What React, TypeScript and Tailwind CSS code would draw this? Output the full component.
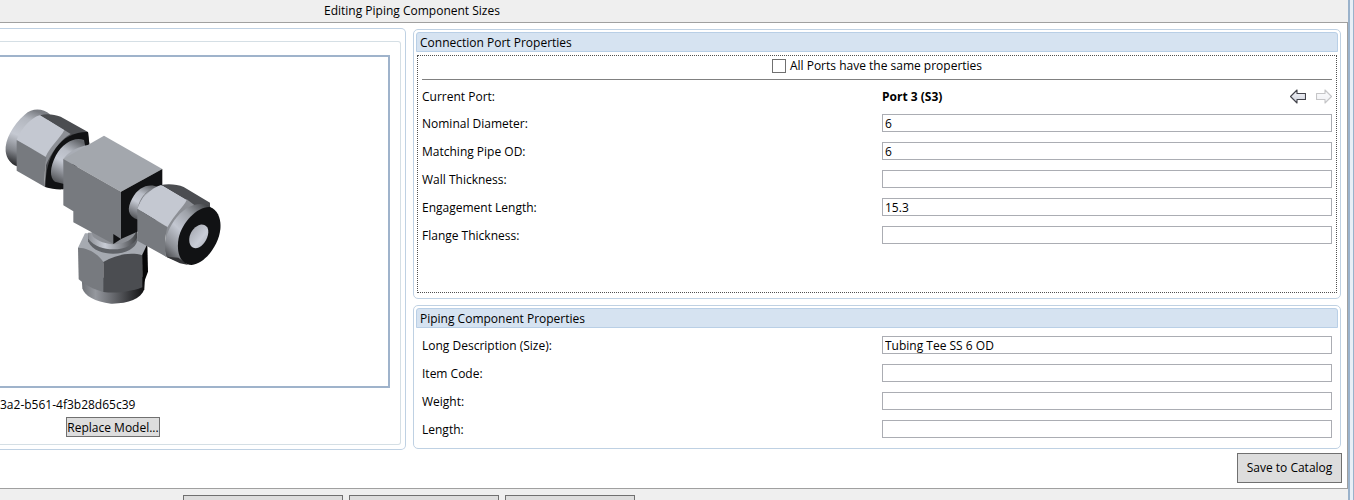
import type { ReactNode } from "react";

interface Field {
  id: string;
  label: string;
  value?: string;
}

const portFields: Field[] = [
  { id: "nominal-diameter", label: "Nominal Diameter:", value: "6" },
  { id: "matching-pipe-od", label: "Matching Pipe OD:", value: "6" },
  { id: "wall-thickness", label: "Wall Thickness:" },
  { id: "engagement-length", label: "Engagement Length:", value: "15.3" },
  { id: "flange-thickness", label: "Flange Thickness:" },
];

const componentFields: Field[] = [
  { id: "long-description", label: "Long Description (Size):", value: "Tubing Tee SS 6 OD" },
  { id: "item-code", label: "Item Code:" },
  { id: "weight", label: "Weight:" },
  { id: "length", label: "Length:" },
];

function FieldRow({ id, label, value = "" }: Field) {
  return (
    <div className="grid grid-cols-2 items-end gap-[10px]">
      <label htmlFor={id}>{label}</label>
      <input
        id={id}
        type="text"
        defaultValue={value}
        className="h-[18px] w-full border border-[#abadb3] bg-white pl-[2px] outline-none"
      />
    </div>
  );
}

function Panel({ title, children }: { title: string; children: ReactNode }) {
  return (
    <section className="mr-px rounded-[5px] border border-[#bfd1e3] p-[2px] pb-[5px]">
      <h2 className="h-5 rounded-t-[3px] border border-[#b9cfe6] bg-[#d6e3f1] pl-[3px] leading-5">{title}</h2>
      {children}
    </section>
  );
}

function Arrow({ flip = false }: { flip?: boolean }) {
  return (
    <svg width="16" height="16" viewBox="1 0 16 16" className={flip ? "-scale-x-100 opacity-30" : ""}>
      <defs>
        <linearGradient id="arrowFill" x1="0" y1="0" x2="0" y2="1">
          <stop offset="0" stopColor="#f4f5f9" />
          <stop offset="1" stopColor="#cfd2dc" />
        </linearGradient>
      </defs>
      <path
        d="M1.5 7.5 L8 1 V4.5 H16.5 V10.5 H8 V14 Z"
        fill="url(#arrowFill)"
        stroke="#42434a"
        strokeWidth="1.1"
        strokeLinejoin="round"
      />
    </svg>
  );
}

function TeeModel() {
  return (
    <svg width="240" height="230" viewBox="0 0 720 690">
      <defs>
        <linearGradient id="capLeft" x1="0.6" y1="0" x2="0.3" y2="1">
          <stop offset="0" stopColor="#7b7e84" />
          <stop offset="0.18" stopColor="#b3b7bf" />
          <stop offset="0.5" stopColor="#c5c9d2" />
          <stop offset="0.78" stopColor="#82858b" />
          <stop offset="1" stopColor="#2c2d30" />
        </linearGradient>
        <linearGradient id="neck" x1="0.7" y1="0" x2="0.3" y2="1">
          <stop offset="0" stopColor="#64676c" />
          <stop offset="0.3" stopColor="#b9bdc6" />
          <stop offset="0.55" stopColor="#c6cad4" />
          <stop offset="1" stopColor="#55575b" />
        </linearGradient>
        <linearGradient id="capRight" x1="0.9" y1="0" x2="0.1" y2="1">
          <stop offset="0" stopColor="#3c3e41" />
          <stop offset="0.3" stopColor="#9da1a8" />
          <stop offset="0.55" stopColor="#c3c7d1" />
          <stop offset="0.8" stopColor="#8b8e94" />
          <stop offset="1" stopColor="#3a3b3e" />
        </linearGradient>
        <linearGradient id="capBottom" x1="0" y1="0" x2="1" y2="0">
          <stop offset="0" stopColor="#6f7277" />
          <stop offset="0.22" stopColor="#95989e" />
          <stop offset="0.5" stopColor="#66686d" />
          <stop offset="0.8" stopColor="#303134" />
          <stop offset="1" stopColor="#0d0d0e" />
        </linearGradient>
        <linearGradient id="collar" x1="0" y1="0" x2="1" y2="0">
          <stop offset="0" stopColor="#8d9096" />
          <stop offset="0.35" stopColor="#c8ccd5" />
          <stop offset="0.7" stopColor="#85888e" />
          <stop offset="1" stopColor="#3f4144" />
        </linearGradient>
        <linearGradient id="hole" x1="0" y1="0" x2="1" y2="1">
          <stop offset="0" stopColor="#9da0a8" />
          <stop offset="0.6" stopColor="#c9cdd7" />
          <stop offset="1" stopColor="#a8acb5" />
        </linearGradient>
      </defs>

      {/* left fitting */}
      <path d="M150 73 C130 56 98 52 74 74 C38 105 14 150 17 184 C19 205 32 222 50 229 L105 170 Z" fill="url(#capLeft)" />
      <path d="M120 76 C140 70 162 73 182 80 L264 126 L268 162 L190 298 L135 291 L137 200 L193 122 Z" fill="#4b4d51" />
      <path d="M264 126 C232 124 190 139 166 176 C146 207 137 240 136 291 C152 297 172 299 190 298 L268 162 Z" fill="#111214" />
      <path d="M120 76 L193 120 C195 140 158 165 137 202 L50 151 C56 128 90 82 120 76 Z" fill="#c4c8d1" />
      <path d="M193 120 L212 132 C180 150 152 190 137 228 V200 C150 170 180 145 193 120 Z" fill="#8c8f95" />
      <path d="M50 150 Q95 175 139 202 C135 230 133 262 135 291 L50 242 Z" fill="#777a7f" />
      <path d="M252 150 C224 139 188 159 168 196 C149 232 148 264 165 275 L192 282 L192 208 L256 170 Z" fill="url(#neck)" />
      <path d="M268 165 C235 168 205 186 190 207 L192 262 L240 190 Z" fill="#a9adb5" />

      {/* bottom fitting */}
      <path d="M245 565 L247 595 C253 617 285 636 333 641 C382 642 423 627 433 598 L435 560 Z" fill="url(#capBottom)" />
      <path d="M234 473 L255 430 L430 430 L444 462 L426 500 L310 520 Z" fill="#a6aab1" />
      <path d="M426 496 L442 462 L444 545 L427 590 Z" fill="#060607" />
      <path d="M234 473 C258 472 292 488 310 516 L310 606 C278 598 256 584 236 568 Z" fill="#777a7f" />
      <path d="M310 516 C345 495 390 485 427 496 L427 592 C395 605 350 611 310 606 Z" fill="#4b4d51" />
      <path d="M264 430 L264 454 C278 483 310 491 339 491 C380 491 406 474 412 452 L412 420 Z" fill="#606368" />
      <path d="M264 428 L265 446 C283 469 311 478 340 478 C376 478 404 463 411 443 L411 418 Z" fill="url(#collar)" />
      <path d="M274 424 L278 438 C292 454 320 463 345 463 C375 461 400 448 408 426 Z" fill="#8c8f95" />

      {/* body */}
      <path d="M312 137 L487 237 L363 305 L190 207 Z" fill="#a3a7ad" />
      <path d="M190 207 L363 305 L363 447 L340 462 L220 397 L220 364 L190 346 Z" fill="#777a7f" />
      <path d="M363 305 L487 237 L487 380 L412 425 L363 447 Z" fill="#111214" />
      <path d="M340 432 L363 447 L340 462 Z" fill="#111214" />

      {/* right fitting */}
      <path d="M475 292 C448 278 414 291 397 325 C380 356 382 379 414 389 L440 330 Z" fill="url(#neck)" />
      <path d="M465 294 C433 302 412 338 412 375" fill="none" stroke="#808389" strokeWidth="3" />
      <path d="M483 285 C505 280 533 283 551 291 L630 338 L630 356 L540 390 L558 330 Z" fill="#4b4d51" />
      <path d="M560 328 C535 350 512 380 498 411 L496 500 L530 490 L590 350 Z" fill="#8c8f95" />
      <path d="M630 349 C597 331 552 349 522 392 C496 431 487 471 500 501 L555 522 L640 390 Z" fill="url(#capRight)" />
      <path d="M483 285 L560 330 C552 349 526 370 502 412 L412 357 C420 330 451 294 483 285 Z" fill="#c4c8d1" />
      <path d="M412 356 L502 411 C496 435 493 468 498 500 L412 452 Z" fill="#777a7f" />
      <path d="M498 500 L535 503 L565 525 L540 520 Z" fill="#333437" />
      <path d="M630 351 C655 361 664 389 661 418 C656 466 616 520 575 525 C541 524 528 488 536 444 C546 397 592 349 630 351 Z" fill="#111214" />
      <path d="M601 404 C619 402 628 415 624 434 C619 457 602 474 586 475 C570 473 565 457 569 438 C574 421 587 407 601 404 Z" fill="url(#hole)" />
    </svg>
  );
}

export default function App() {
  return (
    <div className="flex h-screen overflow-hidden bg-white font-['Open_Sans','Noto_Sans',sans-serif] text-[12px] leading-4 text-black">
      <div className="flex min-w-0 flex-1 flex-col">
        <header className="h-[23px] shrink-0 border-b border-[#a0a0a0] bg-[#efefef] pt-[3px] pl-[324px]">
          <h1>Editing Piping Component Sizes</h1>
        </header>

        <main className="flex shrink-0 gap-[7px] border-r border-[#a0a0a0] pr-[5px] pb-[5px]">
          {/* 3D preview */}
          <section className="mt-[5px] mb-[33px] w-[406px] shrink-0 rounded-r-[5px] border border-l-0 border-[#bfd1e3] pt-3 pr-1 pb-1">
            <div className="h-full rounded-r-[3px] border border-l-0 border-[#d5dfe5] pt-[13px] pr-[10px]">
              <div className="h-[333px] border-2 border-l-0 border-[#9fb3cb] pt-[33px]">
                <TeeModel />
              </div>
              <p className="mt-[9px] whitespace-nowrap">3a2-b561-4f3b28d65c39</p>
              <button
                type="button"
                className="mt-1 mb-[6px] ml-[66px] flex h-5 w-[94px] items-center justify-center border border-[#707070] bg-[#dddddd] pt-[2px] whitespace-nowrap"
              >
                Replace Model...
              </button>
            </div>
          </section>

          <div className="flex min-w-0 flex-1 flex-col gap-[6px] pt-[6px]">
            <Panel title="Connection Port Properties">
              <div className="mx-px mt-[3px] h-[238px] border border-dotted border-[#505050] px-1">
                <div className="flex h-6 items-center justify-center gap-1 border-b border-[#808080] pb-[3px]">
                  <input
                    id="same-properties"
                    type="checkbox"
                    className="size-[14px] appearance-none border border-[#707070] bg-white checked:bg-[#707070]"
                  />
                  <label htmlFor="same-properties">All Ports have the same properties</label>
                </div>
                <div className="mt-[9px] grid grid-cols-2 items-center gap-[10px]">
                  <span>Current Port:</span>
                  <div className="flex items-center justify-between">
                    <span className="font-bold">Port 3 (S3)</span>
                    <div className="flex gap-[10px]">
                      <button type="button">
                        <Arrow />
                      </button>
                      <button type="button" disabled>
                        <Arrow flip />
                      </button>
                    </div>
                  </div>
                </div>
                <div className="mt-[9px] flex flex-col gap-[10px]">
                  {portFields.map((field) => (
                    <FieldRow key={field.id} {...field} />
                  ))}
                </div>
              </div>
            </Panel>

            <Panel title="Piping Component Properties">
              <div className="mx-[6px] mt-2 mb-[5px] flex flex-col gap-[10px]">
                {componentFields.map((field) => (
                  <FieldRow key={field.id} {...field} />
                ))}
              </div>
            </Panel>

            <button
              type="button"
              className="-mt-[2px] h-[30px] w-[105px] self-end border border-[#707070] bg-[#dddddd]"
            >
              Save to Catalog
            </button>
          </div>
        </main>

        {/* bottom toolbar, cut off by the window edge */}
        <footer className="flex flex-1 gap-[6px] border-t border-[#a0a0a0] bg-[#efefef] pt-[6px] pl-[183px]">
          <button type="button" className="h-6 w-40 border border-[#707070] bg-[#dddddd]" />
          <button type="button" className="h-6 w-[150px] border border-[#707070] bg-[#dddddd]" />
          <button type="button" className="h-6 w-[130px] border border-[#707070] bg-[#dddddd]" />
        </footer>
      </div>

      {/* window frame */}
      <div className="w-[6px] shrink-0 border-r border-l-2 border-[#9ab2cb] bg-[#e8eff7]" />
    </div>
  );
}
